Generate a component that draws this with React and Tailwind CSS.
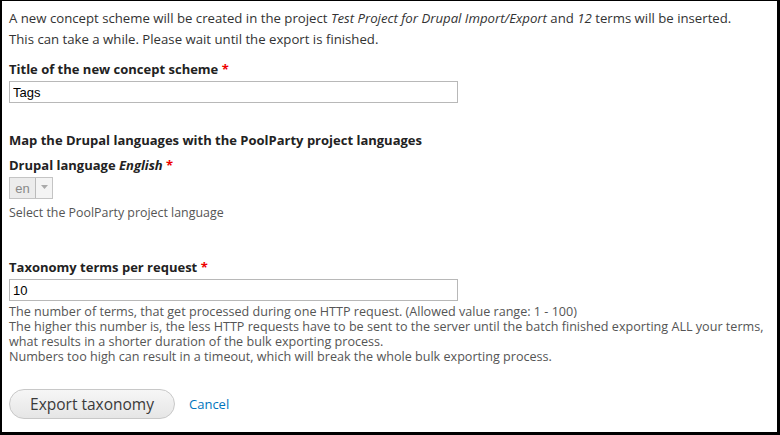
export default function App() {
  const font = { fontFamily: '"Open Sans", "Noto Sans", sans-serif' };
  const arial = { fontFamily: '"Liberation Sans", Arial, sans-serif' };
  return (
    <div
      className="w-[780px] h-[435px] bg-white border-l-2 border-t border-r-[3px] border-b-[3px] border-black pl-[7px] pt-[7px] text-[#333] text-[13.2px] leading-[21px] overflow-hidden"
      style={font}
    >
      <p>
        A new concept scheme will be created in the project <em>Test Project for Drupal Import/Export</em> and <em>12</em> terms will be inserted.
        <br />
        This can take a while. Please wait until the export is finished.
      </p>

      <div className="mt-[9px]">
        <label className="block font-bold text-[13px] text-[#222]">
          Title of the new concept scheme <span className="text-[#e00]">*</span>
        </label>
        <input
          readOnly
          value="Tags"
          className="mt-[1px] block w-[449px] h-[22px] border border-[#b8b8b8] px-[3px] text-[13px] text-black outline-none"
          style={arial}
        />
      </div>

      <h3 className="mt-[27px] font-bold text-[13px] text-[#222]">Map the Drupal languages with the PoolParty project languages</h3>

      <div className="mt-[4px]">
        <label className="block font-bold text-[13px] text-[#222]">
          Drupal language <em>English</em> <span className="text-[#e00]">*</span>
        </label>
        <div className="mt-[1px] flex w-[44px] h-[22px] border border-[#c4c4c4] bg-[#ececec]">
          <span className="flex-1 flex items-center justify-center text-[13px] text-[#888]" style={arial}>
            en
          </span>
          <span className="w-[17px] border-l border-[#bbb] bg-[#f4f4f4] flex items-start justify-center pt-[7px]">
            <svg width="7" height="4" viewBox="0 0 7 4"><path d="M0 0h7L3.5 4z" fill="#aaa" /></svg>
          </span>
        </div>
        <div className="mt-[6px] text-[12.4px] leading-[16px] text-[#555]">Select the PoolParty project language</div>
      </div>

      <div className="mt-[36px]">
        <label className="block font-bold text-[13px] text-[#222]">
          Taxonomy terms per request <span className="text-[#e00]">*</span>
        </label>
        <input
          readOnly
          value="10"
          className="mt-[1px] block w-[449px] h-[22px] border border-[#b8b8b8] px-[3px] text-[13px] text-black outline-none"
          style={arial}
        />
        <div className="mt-[3px] text-[12.6px] leading-[15px] text-[#555]">
          The number of terms, that get processed during one HTTP request. (Allowed value range: 1 - 100)
          <br />
          The higher this number is, the less HTTP requests have to be sent to the server until the batch finished exporting ALL your terms,
          <br />
          what results in a shorter duration of the bulk exporting process.
          <br />
          Numbers too high can result in a timeout, which will break the whole bulk exporting process.
        </div>
      </div>

      <div className="mt-[25px] flex items-center">
        <button className="h-[30px] w-[166px] rounded-full border border-[#c8c8c8] bg-gradient-to-b from-[#f6f6f6] to-[#e6e6e6] text-[15.5px] text-[#3a3a3a]">
          Export taxonomy
        </button>
        <a href="#" className="ml-[14px] text-[13px] text-[#0074bd]">Cancel</a>
      </div>
    </div>
  );
}
